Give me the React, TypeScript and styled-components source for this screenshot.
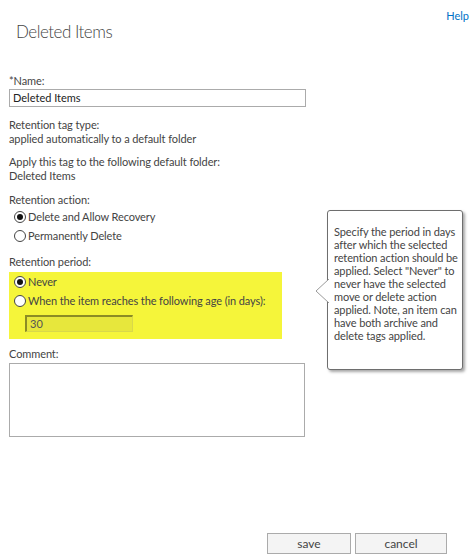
import { createGlobalStyle, styled } from "styled-components";

const GlobalStyle = createGlobalStyle`
  html, body {
    margin: 0;
    padding: 0;
    background: #ffffff;
  }
  body {
    font-family: Lato, "Open Sans", "Liberation Sans", sans-serif;
    font-size: 11px;
    color: #444444;
  }
`;

const Page = styled.div`
  position: relative;
  width: 474px;
  height: 560px;
  box-sizing: border-box;
  padding: 0 9px;
  display: flex;
  flex-direction: column;
`;

const Header = styled.div`
  display: flex;
  justify-content: space-between;
  align-items: flex-start;
  height: 74px;
`;

const Title = styled.h1`
  margin: 21px 0 0 7px;
  font-size: 17px;
  font-weight: 300;
  letter-spacing: -0.5px;
  color: #444444;
`;

const HelpLink = styled.a`
  margin: 9px -4px 0 0;
  font-size: 11px;
  color: #0072c6;
  text-decoration: none;
`;

const Group = styled.div<{ $gap?: number }>`
  display: flex;
  flex-direction: column;
  margin-bottom: ${(p) => p.$gap ?? 9}px;
`;

const Line = styled.div`
  line-height: 14px;
  white-space: nowrap;
  letter-spacing: -0.1px;
`;

const TextInput = styled.div`
  box-sizing: border-box;
  width: 297px;
  height: 18px;
  margin-top: 1px;
  border: 1px solid #ababab;
  padding: 0 3px;
  line-height: 16px;
  color: #222222;
`;

const RadioRow = styled.div`
  display: flex;
  align-items: center;
  gap: 2px;
  height: 19px;
  padding-left: 5px;
  white-space: nowrap;
  letter-spacing: -0.1px;
`;

const RadioDot = styled.span<{ $checked?: boolean }>`
  box-sizing: border-box;
  flex-shrink: 0;
  width: 12px;
  height: 12px;
  border-radius: 50%;
  border: 1px solid #444444;
  background: #ffffff;
  display: inline-flex;
  align-items: center;
  justify-content: center;
  &::after {
    content: "";
    width: 6px;
    height: 6px;
    border-radius: 50%;
    background: #111111;
    display: ${(p) => (p.$checked ? "block" : "none")};
  }
`;

const Highlight = styled.div`
  width: 273px;
  margin-top: 3px;
  padding: 0 0 7px 0;
  background: #f5f53a;
  display: flex;
  flex-direction: column;
`;

const DaysInput = styled.div`
  box-sizing: border-box;
  width: 108px;
  height: 17px;
  margin: 5px 0 0 16px;
  padding-left: 3px;
  background: #e7e73c;
  border-top: 2px solid #8c8c24;
  border-left: 2px solid #8c8c24;
  border-right: 1px solid #d9d94a;
  border-bottom: 1px solid #d9d94a;
  line-height: 14px;
  color: #555555;
`;

const CommentBox = styled.div`
  box-sizing: border-box;
  width: 296px;
  height: 74px;
  margin-top: 2px;
  border: 1px solid #ababab;
`;

const Footer = styled.div`
  display: flex;
  justify-content: flex-end;
  gap: 4px;
  margin-top: auto;
  margin-bottom: 6px;
  padding-right: 18px;
`;

const Button = styled.button<{ $width: number }>`
  box-sizing: border-box;
  width: ${(p) => p.$width}px;
  height: 21px;
  border: 1px solid #ababab;
  background: #f4f4f4;
  font-family: inherit;
  font-size: 12px;
  color: #444444;
  padding: 0;
`;

const Callout = styled.div`
  position: absolute;
  left: 327px;
  top: 210px;
  width: 136px;
  height: 160px;
  box-sizing: border-box;
  padding: 14px 0 0 6px;
  background: #ffffff;
  border: 1px solid #6e6e6e;
  border-radius: 3px;
  box-shadow: 2px 2px 3px rgba(0, 0, 0, 0.35);
  font-size: 11px;
  line-height: 13px;
  letter-spacing: -0.1px;
  color: #444444;
  white-space: nowrap;
`;

const CalloutArrow = styled.svg`
  position: absolute;
  left: -13px;
  top: 68px;
`;

const tipLines = [
  "Specify the period in days",
  "after which the selected",
  "retention action should be",
  'applied. Select "Never" to',
  "never have the selected",
  "move or delete action",
  "applied. Note, an item can",
  "have both archive and",
  "delete tags applied.",
];

export default function App() {
  return (
    <>
      <GlobalStyle />
      <Page>
        <Header>
          <Title>Deleted Items</Title>
          <HelpLink href="#">Help</HelpLink>
        </Header>

        <Group $gap={11}>
          <Line>*Name:</Line>
          <TextInput>Deleted Items</TextInput>
        </Group>

        <Group>
          <Line>Retention tag type:</Line>
          <Line>applied automatically to a default folder</Line>
        </Group>

        <Group $gap={10}>
          <Line>Apply this tag to the following default folder:</Line>
          <Line>Deleted Items</Line>
        </Group>

        <Group $gap={10}>
          <Line>Retention action:</Line>
          <RadioRow>
            <RadioDot $checked />
            Delete and Allow Recovery
          </RadioRow>
          <RadioRow>
            <RadioDot />
            Permanently Delete
          </RadioRow>
        </Group>

        <Group $gap={8}>
          <Line>Retention period:</Line>
          <Highlight>
            <RadioRow>
              <RadioDot $checked />
              Never
            </RadioRow>
            <RadioRow>
              <RadioDot />
              When the item reaches the following age (in days):
            </RadioRow>
            <DaysInput>30</DaysInput>
          </Highlight>
        </Group>

        <Group>
          <Line>Comment:</Line>
          <CommentBox />
        </Group>

        <Footer>
          <Button $width={84}>save</Button>
          <Button $width={92}>cancel</Button>
        </Footer>

        <Callout>
          {tipLines.map((t) => (
            <div key={t}>{t}</div>
          ))}
          <CalloutArrow width="14" height="24" viewBox="0 0 14 24">
            <path d="M14 0 L1 12 L14 24" fill="#ffffff" stroke="#9a9a9a" strokeWidth="1" />
          </CalloutArrow>
        </Callout>
      </Page>
    </>
  );
}
